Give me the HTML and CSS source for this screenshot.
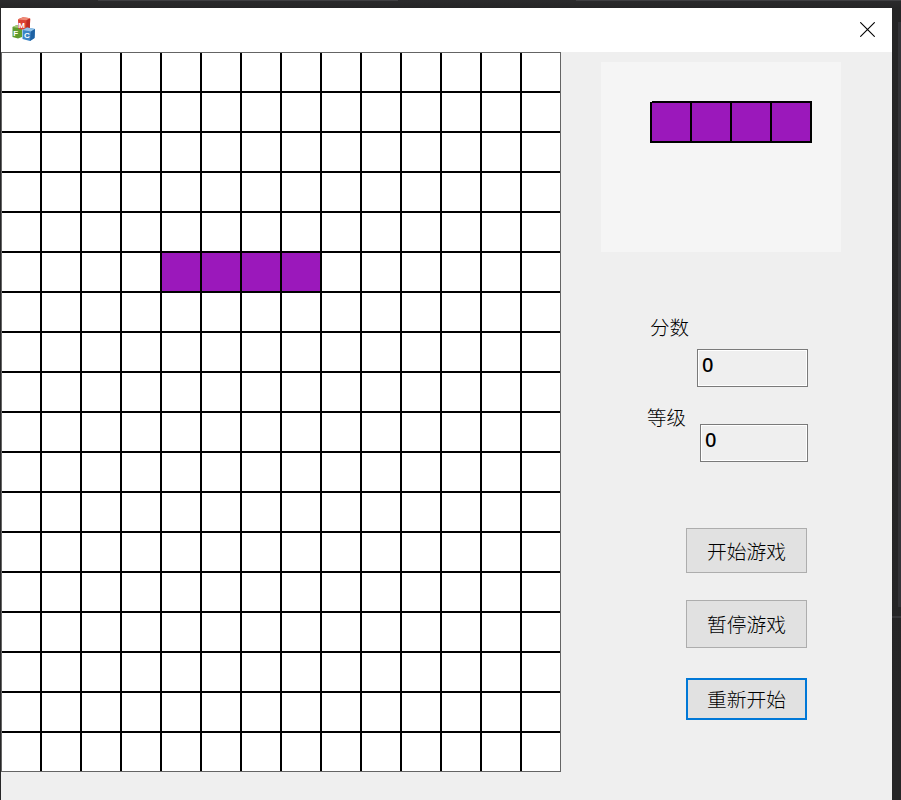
FILE: index.html
```html
<!DOCTYPE html>
<html lang="zh-CN">
<head>
    <meta charset="UTF-8">
    <meta name="viewport" content="width=device-width, initial-scale=1.0">
    <title>俄罗斯方块</title>
    <link rel="stylesheet" href="styles.css">
</head>
<body>
    <div class="window">
        <div class="titlebar">
            <svg class="logo" width="24" height="24" viewBox="0 0 24 24">
                <path d="M0.5 10L5 8L10 9V20L6 21.5L0.5 20Z" fill="#5f9c2c"/>
                <path d="M0.5 10L5 8L10 9L7 11Z" fill="#a9cc7c"/>
                <path d="M6 3Q6 2 7 1.7L11 0.3L17 1Q18.3 1.3 18.2 2.5L17.8 11L13 13L6.5 12Z" fill="#dc4433"/>
                <path d="M6 2.5L11 0.3L18 1.3L14.5 3.3Z" fill="#ee8a76"/>
                <path d="M14.5 3.3L18.2 1.5L17.8 11L14 13Z" fill="#c02a20"/>
                <path d="M10.5 13L15 10.5L23 12L22.5 21L18 24L10.5 22Z" fill="#3c85c6"/>
                <path d="M10.5 13L15 10.5L23 12L19 14.5Z" fill="#94c4e8"/>
                <path d="M19 14.5L23 12L22.5 21L18 24Z" fill="#1f62a3"/>
                <text class="logo-letter" x="6.3" y="11">M</text>
                <text class="logo-letter" x="1.2" y="18.7">F</text>
                <text class="logo-letter" x="12" y="21.3">C</text>
            </svg>
            <svg class="close" width="15" height="15" viewBox="0 0 15 15">
                <path d="M0.3 0.3L14.7 14.7M14.7 0.3L0.3 14.7" stroke="#000" stroke-width="1.1"/>
            </svg>
        </div>
        <div class="content">
            <div class="board" id="board"></div>
            <div class="side">
                <div class="preview">
                    <div class="piece">
                        <div class="block"></div>
                        <div class="block"></div>
                        <div class="block"></div>
                        <div class="block"></div>
                    </div>
                </div>
                <div class="field score">
                    <label for="score">分数</label>
                    <div class="value" id="score">0</div>
                </div>
                <div class="field level">
                    <label for="level">等级</label>
                    <div class="value" id="level">0</div>
                </div>
                <div class="buttons">
                    <button class="start">开始游戏</button>
                    <button class="pause">暂停游戏</button>
                    <button class="restart">重新开始</button>
                </div>
            </div>
        </div>
    </div>
    <script>
        const ROWS = 18;
        const COLS = 14;
        const piece = [[5, 4], [5, 5], [5, 6], [5, 7]];
        const board = document.getElementById('board');

        for (let r = 0; r < ROWS; r++) {
            for (let c = 0; c < COLS; c++) {
                const cell = document.createElement('div');
                cell.className = 'cell';
                if (piece.some(p => p[0] === r && p[1] === c)) {
                    cell.classList.add('filled');
                }
                board.appendChild(cell);
            }
        }
    </script>
</body>
</html>
```
FILE: styles.css
```css
* {
    box-sizing: border-box;
}
body {
    margin: 0;
    padding: 8px 9px 0 1px;
    height: 800px;
    overflow: hidden;
    background:
        linear-gradient(#3f3f42, #3f3f42) 98px 0 / 300px 1px no-repeat,
        linear-gradient(#3f3f42, #3f3f42) 576px 0 / 325px 1px no-repeat,
        linear-gradient(#333337, #333337) 898px 22px / 3px 585px no-repeat,
        linear-gradient(#37373a, #37373a) 892px 616px / 9px 2px no-repeat,
        linear-gradient(#2b2b2d, #252526 8px, #262627);
    font-family: "Noto Sans CJK SC", sans-serif;
}
.window {
    width: 891px;
    height: 792px;
    background-color: #efefef;
}
.titlebar {
    display: flex;
    justify-content: space-between;
    align-items: center;
    height: 44px;
    padding: 0 17px 0 11px;
    background-color: #fff;
}
.logo {
    margin-bottom: 2px;
}
.logo-letter {
    font: bold 8px "Liberation Sans", sans-serif;
    fill: #fff;
}
.close {
    margin-bottom: 1px;
}
.content {
    display: flex;
}
.board {
    display: grid;
    grid-template-columns: repeat(14, 38px);
    grid-template-rows: repeat(18, 38px);
    gap: 2px;
    width: 560px;
    height: 720px;
    border: 1px solid #646464;
    background-color: #000;
}
.cell {
    background-color: #fff;
}
.cell.filled, .block {
    background-color: #9b18bb;
}
.side {
    padding: 10px 0 0 40px;
}
.preview {
    width: 240px;
    height: 190px;
    padding: 39px 0 0 49px;
    background-color: #f5f5f5;
}
.piece {
    display: flex;
    gap: 2px;
    width: 162px;
    height: 42px;
    padding: 2px;
    background-color: #000;
    clip-path: polygon(2px 0, 100% 0, 100% 100%, 0 100%, 0 1px, 2px 1px);
}
.block {
    width: 38px;
    height: 38px;
}
.field {
    display: flex;
    align-items: flex-start;
    justify-content: space-between;
    width: 207px;
}
.field label {
    font-size: 19.5px;
    font-weight: 300;
    line-height: 26px;
    color: #000;
}
.value {
    height: 38px;
    padding: 0 4px;
    border: 1px solid #7a7a7a;
    box-shadow: inset 0 0 0 1px #fff;
    font-family: "Noto Sans", sans-serif;
    font-size: 20px;
    font-weight: 500;
    line-height: 30px;
    color: #000;
}
.score {
    margin-top: 62px;
    padding-left: 49px;
}
.score .value {
    width: 111px;
    margin-top: 35px;
}
.level {
    margin-top: 17px;
    padding-left: 46px;
}
.level .value {
    width: 108px;
    margin-top: 20px;
}
.buttons {
    display: flex;
    flex-direction: column;
    width: 121px;
    margin: 66px 0 0 85px;
}
button {
    padding: 0 0 1px;
    border: 1px solid #adadad;
    background-color: #e1e1e1;
    font-family: inherit;
    font-size: 19.8px;
    font-weight: 300;
    color: #000;
}
.start {
    height: 45px;
}
.pause {
    height: 48px;
    margin-top: 27px;
    padding-bottom: 2px;
}
.restart {
    height: 42px;
    margin-top: 30px;
    padding-bottom: 2px;
    border: 2px solid #0078d7;
}
```
